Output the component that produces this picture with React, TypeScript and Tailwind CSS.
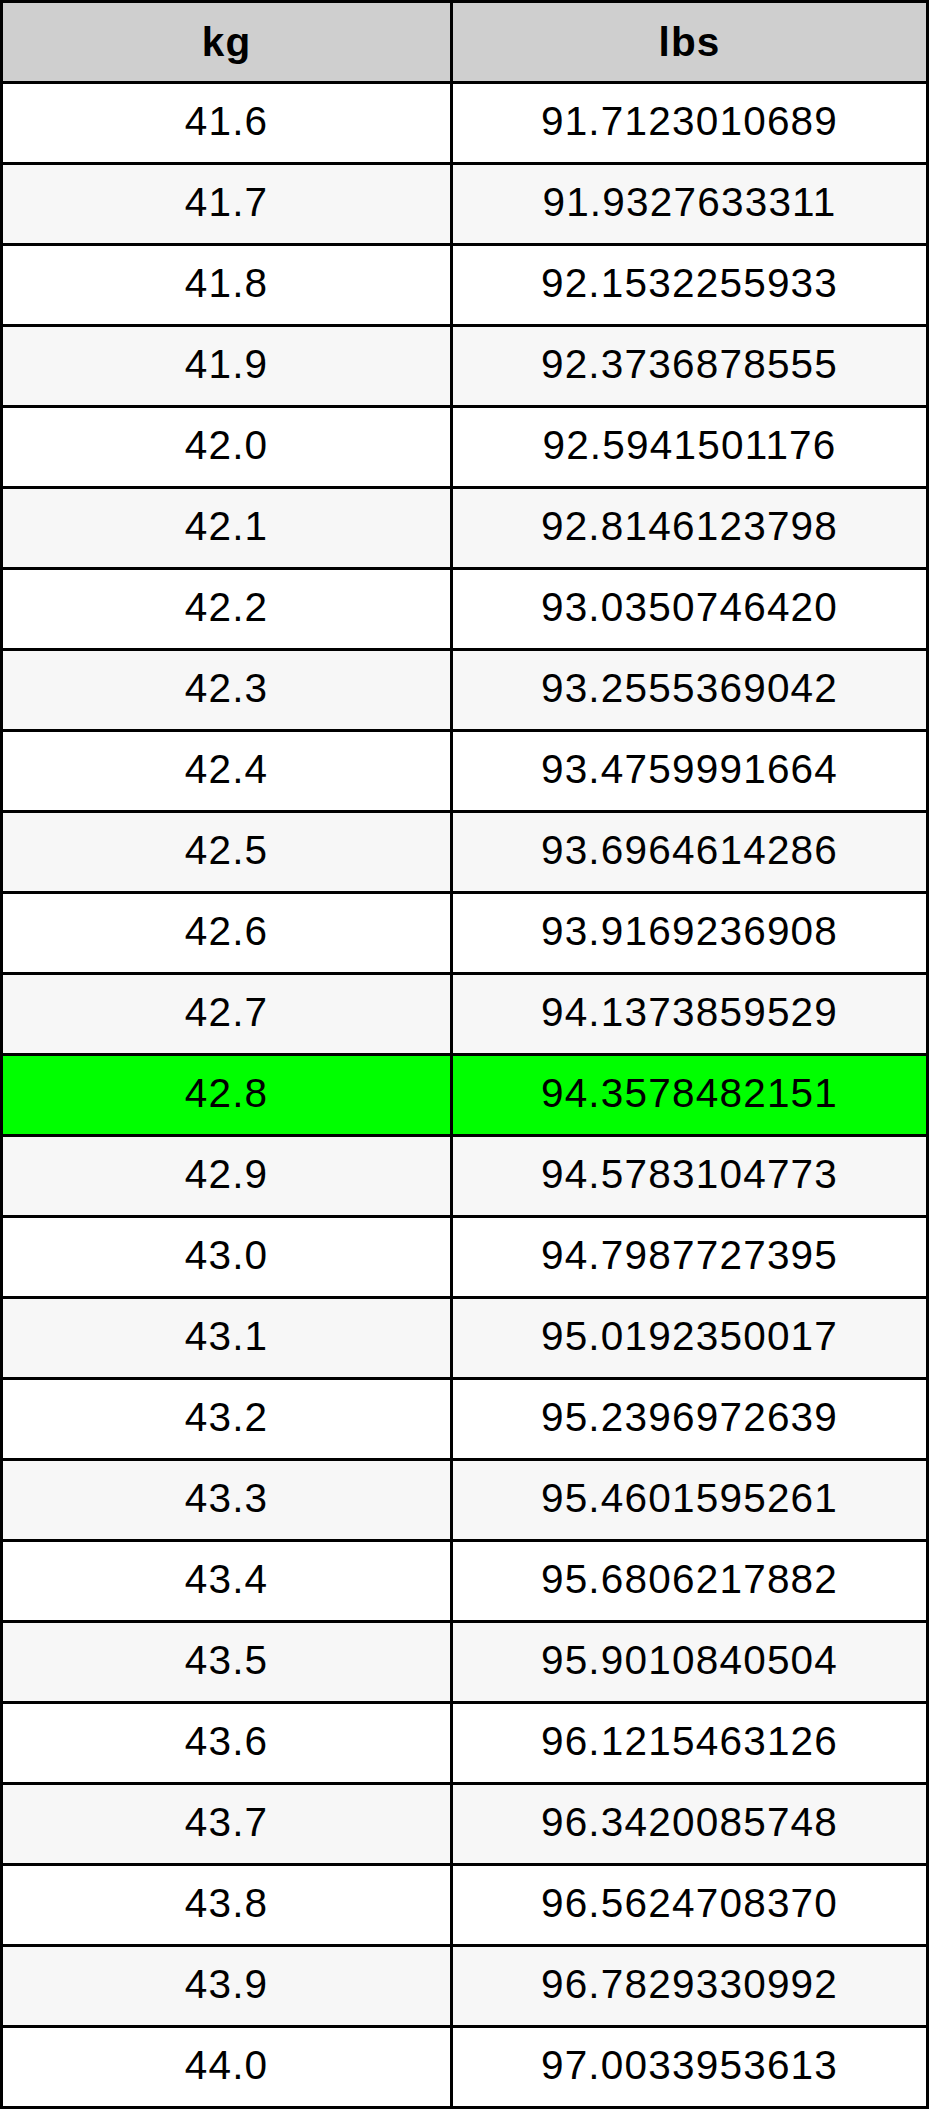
const rows: [string, string][] = [
  ["41.6", "91.7123010689"],
  ["41.7", "91.9327633311"],
  ["41.8", "92.1532255933"],
  ["41.9", "92.3736878555"],
  ["42.0", "92.5941501176"],
  ["42.1", "92.8146123798"],
  ["42.2", "93.0350746420"],
  ["42.3", "93.2555369042"],
  ["42.4", "93.4759991664"],
  ["42.5", "93.6964614286"],
  ["42.6", "93.9169236908"],
  ["42.7", "94.1373859529"],
  ["42.8", "94.3578482151"],
  ["42.9", "94.5783104773"],
  ["43.0", "94.7987727395"],
  ["43.1", "95.0192350017"],
  ["43.2", "95.2396972639"],
  ["43.3", "95.4601595261"],
  ["43.4", "95.6806217882"],
  ["43.5", "95.9010840504"],
  ["43.6", "96.1215463126"],
  ["43.7", "96.3420085748"],
  ["43.8", "96.5624708370"],
  ["43.9", "96.7829330992"],
  ["44.0", "97.0033953613"],
]

export default function App() {
  return (
    <div className="bg-white font-['Liberation_Sans',Arial,sans-serif] text-black">
      <table className="w-[929px] border-collapse border-[3px] border-black text-center text-[40.5px] leading-none tracking-[1.2px]">
        <thead>
          <tr className="h-[81px] bg-[#cfcfcf]">
            <th className="w-[450px] border-[3px] border-black font-bold">kg</th>
            <th className="border-[3px] border-black font-bold">lbs</th>
          </tr>
        </thead>
        <tbody>
          {rows.map(([kg, lbs], i) => (
            <tr
              key={kg}
              className={`h-[81px] ${kg === "42.8" ? "bg-[#00ff00]" : i % 2 === 1 ? "bg-[#f7f7f7]" : "bg-white"}`}
            >
              <td className="border-[3px] border-black pb-[4px]">{kg}</td>
              <td className="border-[3px] border-black pb-[4px]">{lbs}</td>
            </tr>
          ))}
        </tbody>
      </table>
    </div>
  )
}
